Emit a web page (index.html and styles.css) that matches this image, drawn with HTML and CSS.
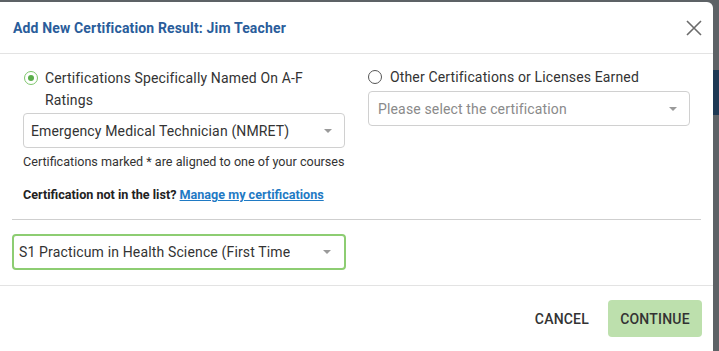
FILE: index.html
```html
<!DOCTYPE html>
<html lang="en">
<head>
  <meta charset="UTF-8">
  <meta name="viewport" content="width=device-width, initial-scale=1.0">
  <title>Add New Certification Result</title>
  <link rel="stylesheet" href="styles.css">
</head>
<body>
  <div class="modal">
    <div class="modal-header">
      <h2 class="modal-title">Add New Certification Result: Jim Teacher</h2>
      <button class="close-btn" aria-label="Close">
        <svg width="16" height="16" viewBox="0 0 16 16"><path d="M1 1L15 15M15 1L1 15" stroke="#6b6b6b" stroke-width="1.6" fill="none"/></svg>
      </button>
    </div>
    <div class="modal-body">
      <div class="cert-columns">
        <div class="cert-col">
          <label class="radio-row">
            <span class="radio checked"></span>
            <span class="radio-text">Certifications Specifically Named On A-F Ratings</span>
          </label>
          <div class="select left-select">
            <span class="select-value">Emergency Medical Technician (NMRET)</span>
            <span class="caret"></span>
          </div>
          <p class="helper">Certifications marked * are aligned to one of your courses</p>
          <p class="not-listed"><b>Certification not in the list?</b> <a href="#">Manage my certifications</a></p>
        </div>
        <div class="cert-col">
          <label class="radio-row right-radio">
            <span class="radio"></span>
            <span class="radio-text">Other Certifications or Licenses Earned</span>
          </label>
          <div class="select right-select">
            <span class="select-value placeholder">Please select the certification</span>
            <span class="caret"></span>
          </div>
        </div>
      </div>
      <hr class="divider">
      <div class="select course-select">
        <span class="select-value clipped">S1 Practicum in Health Science (First Time)</span>
        <span class="caret"></span>
      </div>
    </div>
    <div class="modal-footer">
      <button class="btn-cancel">CANCEL</button>
      <button class="btn-continue">CONTINUE</button>
    </div>
  </div>
  <div class="backdrop-edge">
    <div class="edge-bar"></div>
  </div>
</body>
</html>
```

FILE: styles.css
```css
body {
  margin: 0;
  padding: 0;
  display: flex;
  height: 351px;
  overflow: hidden;
  background-color: #5d6266;
  font-family: Roboto, "Liberation Sans", Arial, sans-serif;
  color: #333;
}
.modal {
  width: 713px;
  margin-top: 2px;
  background: #fff;
  border-radius: 0 6px 0 0;
  flex-shrink: 0;
  height: 360px;
}
.backdrop-edge {
  flex: 1;
}
.edge-bar {
  margin-top: 70px;
  height: 45px;
  background: #1e3954;
}
.modal-header {
  height: 51px;
  display: flex;
  align-items: center;
  justify-content: space-between;
  padding: 0 11px 0 13px;
  border-bottom: 1px solid #e3e3e3;
}
.modal-title {
  margin: 0;
  font-size: 14px;
  font-weight: bold;
  color: #2a5d9b;
  letter-spacing: 0.15px;
}
.close-btn {
  background: none;
  border: none;
  padding: 0;
  width: 16px;
  height: 16px;
  cursor: pointer;
}
.modal-body {
  padding: 13px 12px 15px;
}
.cert-columns {
  display: flex;
  gap: 23px;
  padding: 0 11px;
}
.cert-col {
  width: 322px;
}
.radio-row {
  display: flex;
  align-items: flex-start;
  gap: 7px;
  font-size: 14px;
  line-height: 22px;
  padding-left: 1px;
  letter-spacing: 0.15px;
}
.right-radio {
  padding-left: 0;
  margin-top: -1px;
  gap: 8px;
}
.radio {
  flex-shrink: 0;
  width: 12px;
  height: 12px;
  margin-top: 4px;
  border: 1.5px solid #555;
  border-radius: 50%;
  position: relative;
}
.radio.checked {
  border-color: #7ec66c;
}
.radio.checked::after {
  content: "";
  position: absolute;
  left: 3px;
  top: 3px;
  width: 6px;
  height: 6px;
  border-radius: 50%;
  background: #5aae4a;
}
.select {
  display: flex;
  align-items: center;
  justify-content: space-between;
  box-sizing: border-box;
  border: 1px solid #d0d0d0;
  border-radius: 4px;
  font-size: 14px;
  color: #333;
  letter-spacing: 0.15px;
  padding: 0 12px 0 7px;
}
.left-select {
  height: 35px;
  margin-top: 2px;
}
.right-select {
  height: 35px;
  margin-top: 3px;
  padding-left: 9px;
}
.placeholder {
  color: #8a8a8a;
}
.caret {
  width: 0;
  height: 0;
  border-left: 4px solid transparent;
  border-right: 4px solid transparent;
  border-top: 4px solid #9a9a9a;
}
.helper {
  margin: 5px 0 0;
  font-size: 12.6px;
  line-height: 17px;
  color: #333;
}
.not-listed {
  margin: 16px 0 0;
  font-size: 12.6px;
  line-height: 17px;
  color: #222;
}
.not-listed a {
  color: #1f7ac4;
  font-weight: bold;
}
.divider {
  border: none;
  border-top: 1px solid #cfcfcf;
  margin: 16px 0 14px;
}
.course-select {
  width: 334px;
  height: 36px;
  border: 2px solid #8dcd72;
  padding-left: 5px;
  padding-right: 13px;
}
.clipped {
  display: block;
  width: 271px;
  overflow: hidden;
  white-space: nowrap;
}
.modal-footer {
  border-top: 1px solid #e3e3e3;
  display: flex;
  justify-content: flex-end;
  align-items: flex-start;
  padding: 14px 11px 0 0;
}
.btn-cancel,
.btn-continue {
  font-family: Roboto, "Liberation Sans", Arial, sans-serif;
  font-size: 14px;
  font-weight: 500;
  color: #333;
  border: none;
  height: 37px;
  border-radius: 4px;
  cursor: pointer;
  letter-spacing: 0.2px;
}
.btn-cancel {
  background: none;
  padding: 0 12px;
  margin-right: 7px;
}
.btn-continue {
  background: #bde0ad;
  padding: 0 12px;
  width: 94px;
}
```
